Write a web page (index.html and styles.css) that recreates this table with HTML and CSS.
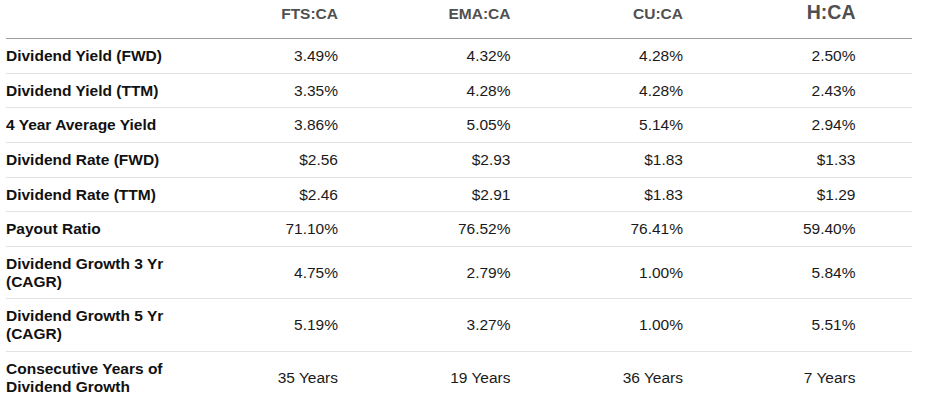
FILE: index.html
```html
<!DOCTYPE html>
<html>
<head>
<meta charset="utf-8">
<link rel="stylesheet" href="styles.css">
</head>
<body>
<table class="divs">
  <colgroup>
    <col class="c-label"><col class="c-val"><col class="c-val"><col class="c-val"><col class="c-val">
  </colgroup>
  <thead>
    <tr>
      <th class="corner"></th>
      <th>FTS:CA</th>
      <th>EMA:CA</th>
      <th>CU:CA</th>
      <th class="big">H:CA</th>
    </tr>
  </thead>
  <tbody>
    <tr><td class="label">Dividend Yield (FWD)</td><td>3.49%</td><td>4.32%</td><td>4.28%</td><td>2.50%</td></tr>
    <tr><td class="label">Dividend Yield (TTM)</td><td>3.35%</td><td>4.28%</td><td>4.28%</td><td>2.43%</td></tr>
    <tr><td class="label">4 Year Average Yield</td><td>3.86%</td><td>5.05%</td><td>5.14%</td><td>2.94%</td></tr>
    <tr><td class="label">Dividend Rate (FWD)</td><td>$2.56</td><td>$2.93</td><td>$1.83</td><td>$1.33</td></tr>
    <tr><td class="label">Dividend Rate (TTM)</td><td>$2.46</td><td>$2.91</td><td>$1.83</td><td>$1.29</td></tr>
    <tr><td class="label">Payout Ratio</td><td>71.10%</td><td>76.52%</td><td>76.41%</td><td>59.40%</td></tr>
    <tr><td class="label">Dividend Growth 3 Yr (CAGR)</td><td>4.75%</td><td>2.79%</td><td>1.00%</td><td>5.84%</td></tr>
    <tr><td class="label">Dividend Growth 5 Yr (CAGR)</td><td>5.19%</td><td>3.27%</td><td>1.00%</td><td>5.51%</td></tr>
    <tr><td class="label">Consecutive Years of Dividend Growth</td><td>35 Years</td><td>19 Years</td><td>36 Years</td><td>7 Years</td></tr>
  </tbody>
</table>
</body>
</html>
```
FILE: styles.css
```css
html, body {
  margin: 0;
  padding: 0;
  background: #ffffff;
}
body {
  padding-left: 6px;
  font-family: "Liberation Sans", Arial, sans-serif;
  font-size: 15.5px;
  color: #1a1a1a;
}
.divs {
  width: 906px;
  table-layout: fixed;
  border-collapse: collapse;
  border-spacing: 0;
}
.c-label { width: 216px; }
.c-val { width: 172.5px; }

.divs th {
  font-weight: bold;
  color: #505050;
  text-align: right;
  padding: 5px 56.5px 15px 0;
  line-height: 17.8px;
  height: 17.8px;
  vertical-align: middle;
  border-bottom: 1px solid #9e9e9e;
}
.divs th.corner { padding: 0; }
.divs th.big {
  font-size: 19.5px;
  padding-bottom: 16px;
  padding-top: 4px;
}
.divs td {
  padding: 8px 56.5px 8px 0;
  line-height: 17.7px;
  text-align: right;
  vertical-align: middle;
  border-bottom: 1px solid #e3e3e3;
}
.divs tbody tr:last-child td {
  border-bottom: none;
}
.divs td.label {
  text-align: left;
  font-weight: bold;
  padding: 8px 8px 8px 0;
  color: #111111;
}
```
